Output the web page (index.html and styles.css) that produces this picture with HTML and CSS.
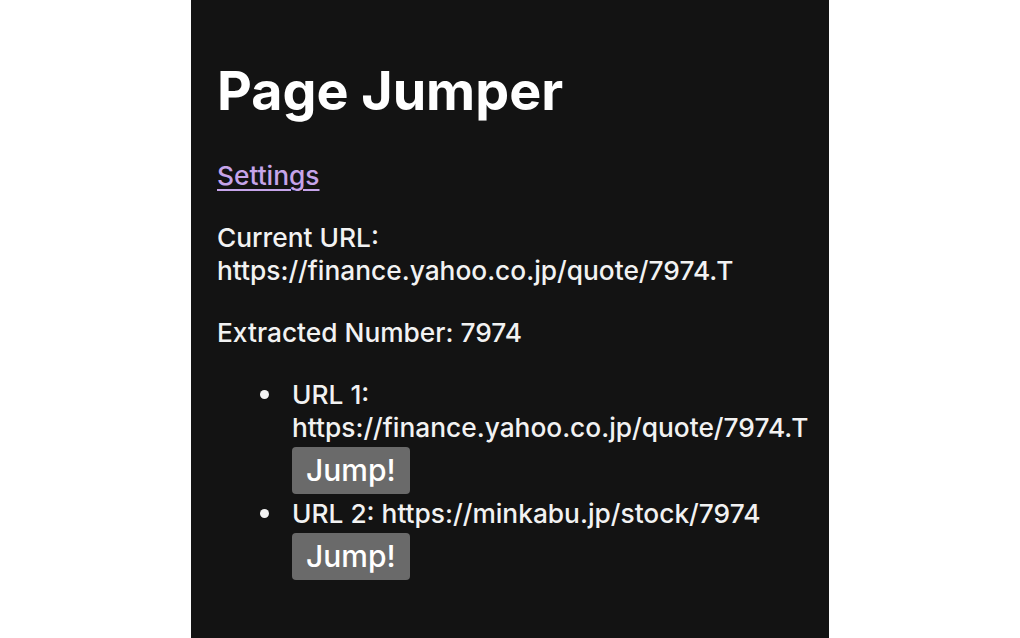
FILE: index.html
```html
<!DOCTYPE html>
<html lang="en">
<head>
  <meta charset="UTF-8" />
  <meta name="viewport" content="width=device-width, initial-scale=1.0"/>
  <title>Page Jumper</title>
  <link rel="stylesheet" href="styles.css">
</head>
<body>
  <div class="popup">
    <h1>Page Jumper</h1>

    <p><a href="#" class="settings-link">Settings</a></p>

    <p>Current URL:<br>https://finance.yahoo.co.jp/quote/7974.T</p>

    <p>Extracted Number: 7974</p>

    <ul class="url-list">
      <li>URL 1: https://finance.yahoo.co.jp/quote/7974.T
        <button class="jump-btn">Jump!</button>
      </li>
      <li>URL 2: https://minkabu.jp/stock/7974
        <button class="jump-btn">Jump!</button>
      </li>
    </ul>
  </div>
</body>
</html>
```

FILE: styles.css
```css
body {
  margin: 0;
  padding: 0;
  background: #ffffff;
  font-family: Inter, "Noto Sans", sans-serif;
}
.popup {
  width: 638px;
  height: 638px;
  margin: 0 auto;
  box-sizing: border-box;
  padding: 55px 26px 0 26px;
  background: #131313;
  color: #f2f2f2;
  font-size: 26.3px;
  line-height: 33px;
  font-weight: 450;
  overflow: hidden;
}
h1 {
  margin: 0 0 32px 0;
  font-size: 53.8px;
  line-height: 72px;
  font-weight: 700;
  color: #ffffff;
}
p {
  margin: 0 0 29px 0;
}
.settings-link {
  color: #c6a4ea;
  text-decoration: underline;
  text-decoration-thickness: 2px;
  text-underline-offset: 4px;
}
.url-list {
  margin: 0;
  padding-left: 75px;
  width: 520px;
  list-style: none;
}
.url-list li {
  margin: 0;
}
.url-list li::before {
  content: "";
  display: inline-block;
  width: 9px;
  height: 9px;
  margin-left: -32px;
  margin-right: 23px;
  border-radius: 50%;
  background: #f2f2f2;
  vertical-align: 5px;
}
.jump-btn {
  display: block;
  margin: 3px 0 3px 0;
  padding: 2px 14px 2px 14px;
  background: #6a6a6a;
  color: #ffffff;
  border: none;
  border-radius: 4px;
  font-family: inherit;
  font-size: 30px;
  font-weight: 450;
  line-height: 43px;
}
```
